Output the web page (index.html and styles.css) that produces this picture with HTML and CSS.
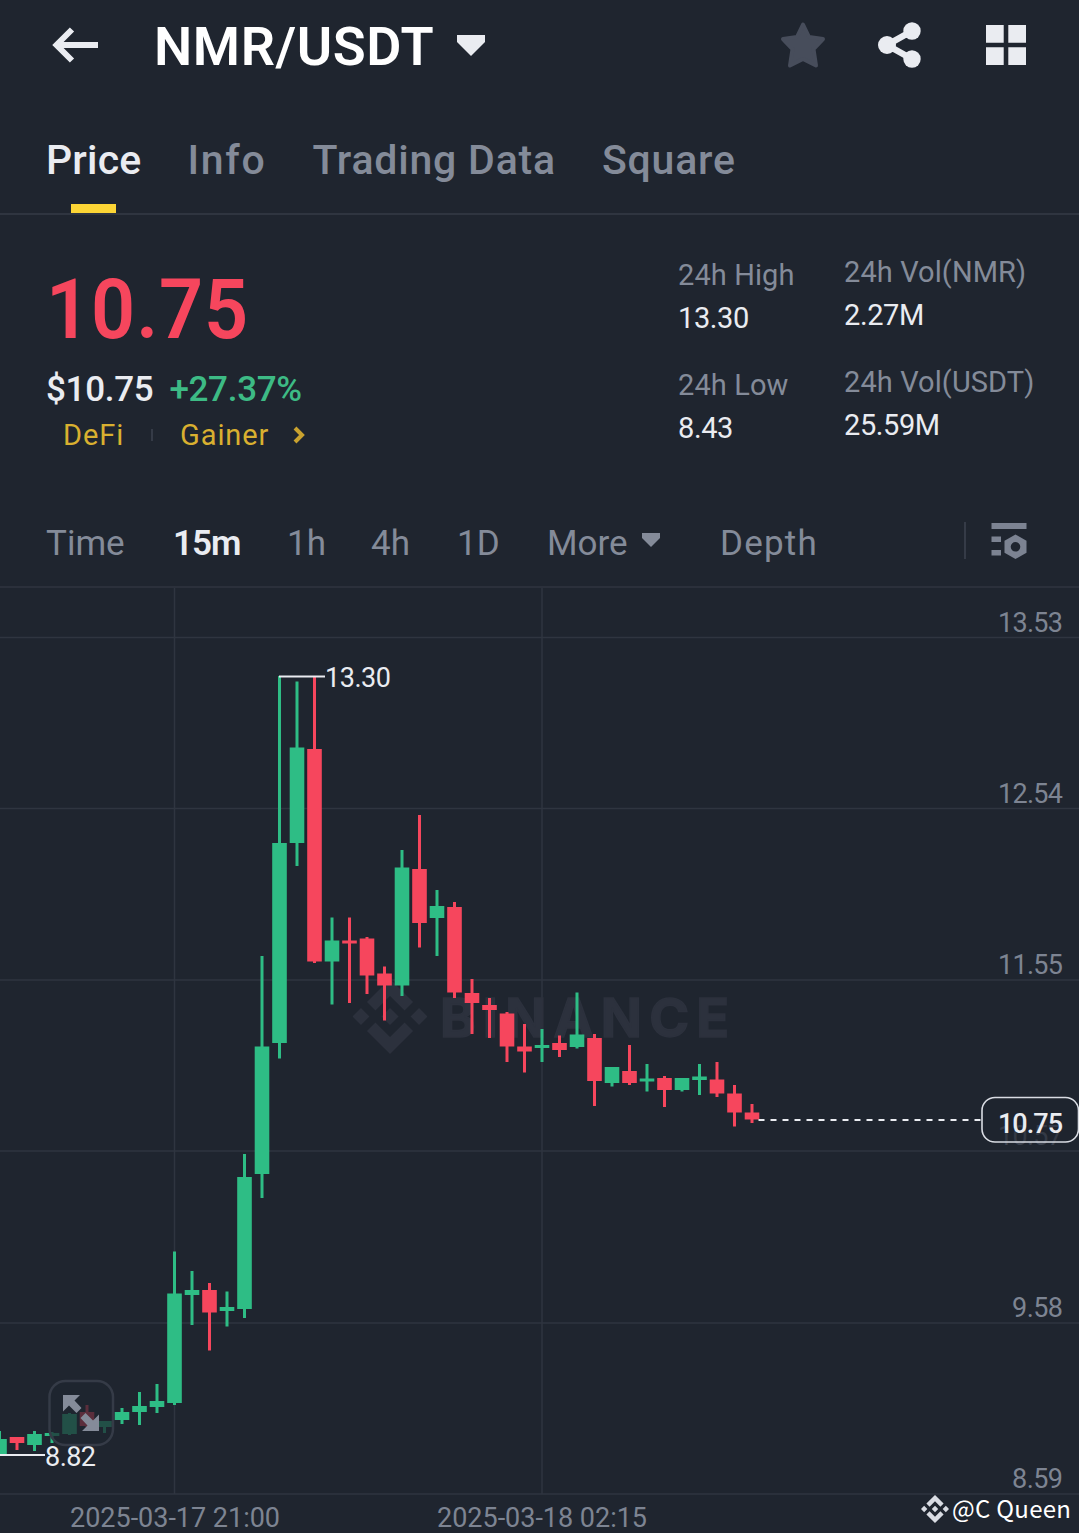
FILE: index.html
```
<!DOCTYPE html>
<html lang="en">
<head>
    <meta charset="utf-8">
    <title>NMR/USDT</title>
    <link rel="stylesheet" href="styles.css">
</head>
<body>

<header class="topbar">
    <svg class="back" width="46" height="36" viewBox="0 0 46 36">
        <path d="M20 2.5L4.5 18L20 33.5M5 18H46" />
    </svg>
    <h1 class="pair">NMR/USDT</h1>
    <svg class="caret" width="28" height="21" viewBox="0 0 28 21">
        <path d="M0 0H28V7L14 21L0 7Z" />
    </svg>
    <div class="actions">
        <svg class="star" width="46" height="48" viewBox="0 0 46 48">
            <path d="M23 3.500L29 16L43 18L33.500 28L36 44.500L23 38L10 44.500L12.500 28L3 18L17 16Z" />
        </svg>
        <svg class="share" width="44" height="48" viewBox="0 0 44 48">
            <path d="M35 10L10 24L35 38" />
            <circle cx="35" cy="10" r="8.700" />
            <circle cx="10" cy="24" r="9" />
            <circle cx="35" cy="38" r="8.700" />
        </svg>
        <svg class="grid" width="40" height="40" viewBox="0 0 40 40">
            <path d="M0 0H17.700V17.700H0ZM22.300 0H40V17.700H22.300ZM0 22.300H17.700V40H0ZM22.300 22.300H40V40H22.300Z" />
        </svg>
    </div>
</header>

<nav class="tabs">
    <a class="tab active">Price</a>
    <a class="tab info">Info</a>
    <a class="tab">Trading Data</a>
    <a class="tab">Square</a>
</nav>

<section class="summary">
    <div class="quote">
        <div class="last">10.75</div>
        <div class="change">
            <span class="usd">$10.75</span>
            <span class="percent">+27.37%</span>
        </div>
        <div class="tags">
            <span>DeFi</span>
            <i class="tagline"></i>
            <span>Gainer</span>
            <svg class="more" width="12" height="18" viewBox="0 0 12 18">
                <path d="M2 2L9 9L2 16" />
            </svg>
        </div>
    </div>
    <div class="stats">
        <dl>
            <dt>24h High</dt>
            <dd>13.30</dd>
        </dl>
        <dl>
            <dt>24h Low</dt>
            <dd>8.43</dd>
        </dl>
    </div>
    <div class="stats volume">
        <dl>
            <dt>24h Vol(NMR)</dt>
            <dd>2.27M</dd>
        </dl>
        <dl>
            <dt>24h Vol(USDT)</dt>
            <dd>25.59M</dd>
        </dl>
    </div>
</section>

<nav class="intervals">
    <a class="time">Time</a>
    <a class="m15 active">15m</a>
    <a class="h1">1h</a>
    <a class="h4">4h</a>
    <a class="d1">1D</a>
    <a class="moretimes">More
        <svg width="18" height="14" viewBox="0 0 18 14"><path d="M0 0H18V5L9 14L0 5Z" /></svg>
    </a>
    <a class="depth">Depth</a>
    <div class="settings">
        <svg width="36" height="37" viewBox="0 0 36 37">
            <path d="M0.500 1H35.500V7H0.500ZM0.500 14.500H10V20H0.500ZM0.500 28H10V33.500H0.500Z" />
            <path fill-rule="evenodd" d="M24.500 12.500L35.500 18.700V30.700L24.500 37L13.500 30.700V18.700ZM24.500 20A4.800 4.800 0 1 0 24.500 29.600A4.800 4.800 0 1 0 24.500 20Z" />
        </svg>
    </div>
</nav>

<main class="chart">
    <svg width="1079" height="945" viewBox="0 588 1079 945">
        <defs>
            <symbol id="logo" viewBox="0 0 126.61 126.61">
                <path d="M38.730 53.200l24.590-24.580 24.600 24.600 14.300-14.310L63.320 0l-38.900 38.900zM0 63.310l14.300-14.310 14.310 14.310-14.310 14.300zM38.730 73.410l24.590 24.590 24.600-24.600 14.310 14.290-38.900 38.910-38.910-38.880zM98 63.310l14.300-14.310 14.310 14.300-14.310 14.320zM77.830 63.300L63.320 48.780 48.790 63.300l14.530 14.530z" />
            </symbol>
        </defs>

        <path class="gridline" d="M0 637.500H1079M0 808.500H1079M0 980H1079M0 1151H1079M0 1323H1079M0 1494H1079M174.500 588V1494M542 588V1494" />

        <g class="watermark">
            <use href="#logo" x="352.500" y="979" width="75" height="75" />
            <text x="440" y="1037" textLength="289">BINANCE</text>
        </g>

        <g class="axis">
            <text x="998" y="632" textLength="65">13.53</text>
            <text x="998" y="803" textLength="65">12.54</text>
            <text x="998" y="974" textLength="65">11.55</text>
            <text class="hidden-price" x="998" y="1145" textLength="65">10.57</text>
            <text x="1012" y="1317" textLength="51">9.58</text>
            <text x="1012" y="1488" textLength="51">8.59</text>
            <text x="70" y="1527" textLength="210">2025-03-17 21:00</text>
            <text x="437" y="1527" textLength="210">2025-03-18 02:15</text>
        </g>

        <g id="candles"></g>

        <g class="marks">
            <path d="M279 676.500H325M0 1455H45" />
            <text x="325" y="687" textLength="66">13.30</text>
            <text x="45" y="1466" textLength="51">8.82</text>
            <path class="dashes" d="M758.500 1120H981" />
            <rect x="982" y="1097.500" width="96.500" height="44.500" rx="13" />
            <text class="current" x="998" y="1133" textLength="65">10.75</text>
        </g>

        <g class="expand">
            <rect x="49.500" y="1381" width="63.500" height="64" rx="16" />
            <path d="M63 1395H80L74.500 1400.500L81.500 1408L76.500 1413L69 1405.500L63 1411.500ZM99 1431H82L87.500 1425.500L80.500 1418L85.500 1413L93 1420.500L99 1414.500Z" />
        </g>

        <g class="author">
            <use href="#logo" x="921" y="1495" width="28" height="28" />
            <text x="952" y="1518" textLength="119">@C Queen</text>
        </g>
    </svg>
</main>

<script src="chart.js"></script>
</body>
</html>
```
FILE: styles.css
```
body {
    margin: 0;
    width: 1079px;
    height: 1533px;
    overflow: hidden;
    background-color: #1f252f;
    color: #eaecf1;
    font-family: Roboto, "Liberation Sans", sans-serif;
}

svg {
    display: block;
    flex: none;
}

/* top bar */
.topbar {
    display: flex;
    align-items: center;
    box-sizing: border-box;
    height: 90px;
    padding: 0 53px 0 52px;
}

.back {
    fill: none;
    stroke: #eaecf1;
    stroke-width: 6;
}

.pair {
    margin: 0 0 0 56px;
    padding-top: 4px;
    width: 303px;
    color: #fff;
    font-size: 54px;
    line-height: 60px;
    font-weight: 600;
    letter-spacing: 0.6px;
}

.caret,
.grid,
.share {
    fill: #eaecf1;
}

.actions {
    display: flex;
    align-items: center;
    margin-left: auto;
}

.star {
    margin-right: 51px;
    fill: #474d5b;
    stroke: #474d5b;
    stroke-width: 4;
    stroke-linejoin: round;
}

.share {
    margin-right: 65px;
}

.share path {
    fill: none;
    stroke: #eaecf1;
    stroke-width: 6.5;
}

.grid {
    margin-right: 0.5px;
}

/* page tabs */
.tabs {
    display: flex;
    gap: 46px;
    height: 78px;
    padding: 45px 47px 0 46px;
    border-bottom: 2px solid #2f3540;
    color: #848b99;
    font-size: 41px;
    line-height: 51px;
    font-weight: 500;
    letter-spacing: 0.8px;
}

.tab.active {
    display: flex;
    flex-direction: column;
    align-items: center;
    color: #eaecf1;
    letter-spacing: 0.2px;
}

.tab.active::after {
    content: "";
    width: 45px;
    height: 9px;
    margin-top: 18px;
    background-color: #fcd535;
}

.tab.info {
    letter-spacing: 1.7px;
}

/* price and 24h numbers */
.summary {
    display: flex;
    height: 285px;
}

.quote {
    width: 632px;
    padding: 60px 0 0 46px;
}

.last {
    color: #f6465d;
    font-size: 84px;
    line-height: 70px;
    font-weight: 600;
    letter-spacing: 1px;
    transform: scaleX(0.92);
    transform-origin: left;
}

.change {
    display: flex;
    gap: 16px;
    margin-top: 25px;
    font-size: 35px;
    line-height: 40px;
    font-weight: 500;
    letter-spacing: -0.3px;
}

.percent {
    color: #3dbb85;
}

.tags {
    display: flex;
    align-items: center;
    margin: 8px 0 0 17px;
    color: #d9b030;
    font-size: 29px;
    line-height: 34px;
    letter-spacing: 0.9px;
}

.tagline {
    width: 2px;
    height: 12px;
    margin: 0 27px;
    background-color: #353b47;
}

.more {
    margin-left: 24px;
    fill: none;
    stroke: #c9a22f;
    stroke-width: 4;
}

.stats {
    width: 166px;
    padding-top: 39px;
    white-space: nowrap;
    font-size: 29px;
    line-height: 43px;
}

.volume {
    padding-top: 36px;
}

.stats dl {
    margin: 0 0 24px;
}

.stats dt {
    color: #848b99;
    letter-spacing: 0.1px;
}

.stats dd {
    margin: 0;
    letter-spacing: -0.4px;
}

/* chart intervals */
.intervals {
    display: flex;
    align-items: center;
    height: 86px;
    padding: 0 52px 0 46px;
    border-bottom: 2px solid #2b303b;
    color: #848b99;
    font-size: 35px;
}

.intervals .active {
    color: #eaecf1;
    font-weight: 600;
    letter-spacing: -1px;
}

.time { width: 127px; }
.m15 { width: 114px; }
.h1 { width: 84px; }
.h4 { width: 86px; }
.d1 { width: 90px; }
.depth { letter-spacing: 1.2px; }

.moretimes {
    display: flex;
    align-items: center;
    gap: 14px;
    width: 173px;
    fill: #848b99;
}

.moretimes svg {
    margin-top: -6px;
}

.settings {
    margin: -6px 0 0 auto;
    padding-left: 25px;
    border-left: 2px solid #353b47;
    fill: #7c8392;
}

/* chart */
.gridline {
    fill: none;
    stroke: #2f3540;
    stroke-width: 1.5;
}

.watermark {
    fill: #2c313d;
    font-family: Inter, sans-serif;
    font-size: 54px;
    font-weight: 700;
}

.watermark text {
    stroke: #2c313d;
    stroke-width: 1.5;
}

.axis {
    fill: #7d8492;
    font-size: 27px;
}

.hidden-price {
    fill: #3d434f;
}

.up {
    fill: #2ebd85;
}

.down {
    fill: #f6465d;
}

.marks {
    fill: #eaecf1;
    font-size: 27px;
}

.marks path {
    stroke: #eaecf1;
    stroke-width: 1.8;
}

.marks .dashes {
    stroke-dasharray: 6 6;
    stroke-width: 1.8;
}

.marks rect {
    fill: #1f252f;
    fill-opacity: 0.3;
    stroke: #d9dce3;
    stroke-width: 1.6;
}

.current {
    font-weight: 500;
}

.expand {
    fill: #848b99;
}

.expand rect {
    fill: #1f252f;
    fill-opacity: 0.72;
    stroke: #353b47;
    stroke-width: 2.5;
}

.author {
    fill: #fff;
    font-family: "Noto Sans CJK SC", "Noto Sans", sans-serif;
    font-size: 24px;
}

.author use {
    fill: #d9dce3;
}
```
FILE: chart.js
```
// one row per candle: colour, high, body top, body bottom, low
const candles = [
    ["up", 1431, 1439, 1454, 1454],
    ["down", 1437, 1437, 1443, 1450],
    ["up", 1431, 1434, 1445, 1451],
    ["up", 1432, 1433, 1436, 1443],
    ["up", 1413, 1414, 1434, 1435],
    ["down", 1405, 1412, 1426, 1427],
    ["up", 1421, 1421, 1427, 1433],
    ["up", 1408, 1412, 1420, 1424],
    ["up", 1392, 1406, 1412, 1425],
    ["up", 1384, 1401, 1407, 1413],
    ["up", 1251.5, 1293.5, 1403, 1405],
    ["up", 1271, 1290, 1295, 1325],
    ["down", 1283, 1290, 1312.5, 1350.5],
    ["up", 1291.5, 1307, 1311, 1326.5],
    ["up", 1154, 1177, 1309, 1318],
    ["up", 956, 1046.5, 1174, 1198],
    ["up", 676, 843, 1043, 1058.5],
    ["up", 681.5, 747.5, 843, 866],
    ["down", 677, 749, 961.5, 963],
    ["up", 917.5, 940.5, 961.5, 1004.5],
    ["down", 917.5, 940.5, 943.5, 1003],
    ["down", 937, 938.5, 975.5, 994],
    ["down", 966.5, 973.5, 985.5, 1020.5],
    ["up", 850, 867.5, 985.5, 996],
    ["down", 815, 869, 923, 947.5],
    ["up", 890, 906, 918, 956],
    ["down", 902, 907, 992.5, 998],
    ["down", 979, 993, 1003, 1034],
    ["down", 998, 1005, 1010, 1038],
    ["down", 1012, 1013.5, 1046.5, 1062],
    ["down", 1024, 1046.5, 1051.5, 1072.5],
    ["up", 1029, 1045, 1048, 1062],
    ["down", 1035.5, 1043, 1050, 1057],
    ["up", 992.5, 1034.5, 1047, 1048.5],
    ["down", 1034, 1038, 1081, 1106],
    ["up", 1067, 1067, 1083, 1086.5],
    ["down", 1045, 1071, 1083, 1085],
    ["up", 1064, 1078.5, 1081.5, 1091.5],
    ["down", 1076, 1078, 1090, 1107],
    ["up", 1078, 1078, 1090, 1091.5],
    ["up", 1064, 1076.5, 1080, 1095],
    ["down", 1062, 1079.5, 1093.5, 1097],
    ["down", 1085, 1093.5, 1112.5, 1126.5],
    ["down", 1104, 1112.5, 1119.5, 1123]
];

const step = 17.5;
let shapes = "";

candles.forEach(function (c, i) {
    const x = i * step - 0.5;
    shapes += `<g class="${c[0]}">
        <rect x="${x - 1.5}" y="${c[1]}" width="3" height="${c[4] - c[1]}" />
        <rect x="${x - 7.3}" y="${c[2]}" width="14.6" height="${c[3] - c[2]}" />
    </g>`;
});

document.getElementById("candles").innerHTML = shapes;
```
